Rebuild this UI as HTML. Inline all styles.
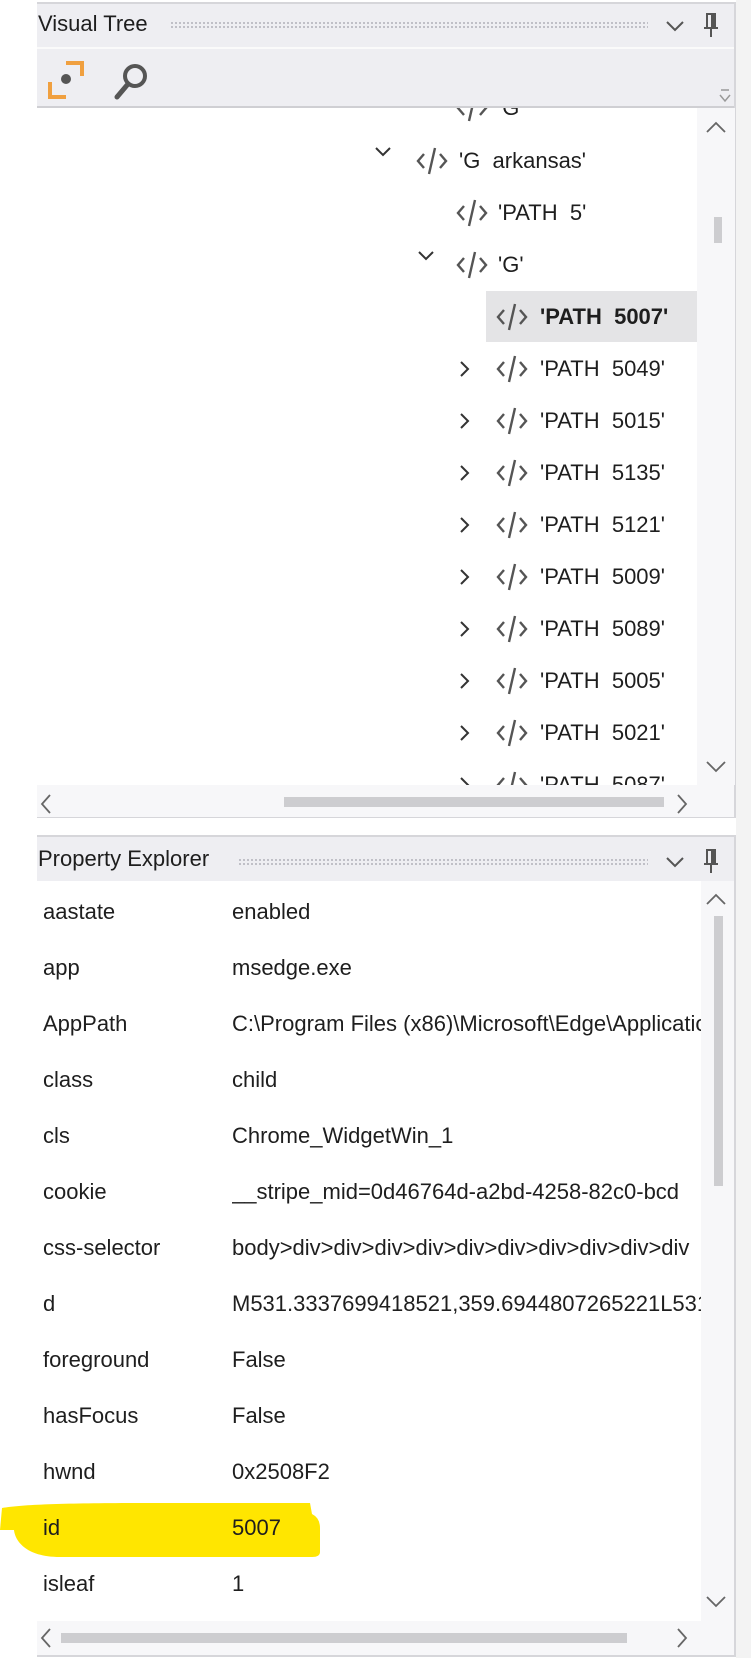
<!DOCTYPE html>
<html><head><meta charset="utf-8"><style>
*{margin:0;padding:0;box-sizing:border-box}
body{width:751px;height:1658px;background:#fff;position:relative;overflow:hidden;font-family:"Liberation Sans",sans-serif;color:#1e1e1e}
.abs{position:absolute}
.panel{position:absolute;left:37px;width:699px;border:2px solid #d6d6da;border-left:none;background:#fff}
.hdr{position:absolute;left:0;right:0;background:#eeeef2}
.title{position:absolute;left:1px;font-size:22px;color:#1e1e1e;white-space:nowrap}
.dots{position:absolute;height:9px;background-image:radial-gradient(circle,#b8b8c0 0.9px,transparent 1.2px);background-size:4px 4px}
.t{position:absolute;font-size:22px;white-space:nowrap;line-height:30px}
.prop{position:absolute;left:43px;font-size:22px;line-height:30px;white-space:nowrap}
.val{position:absolute;left:232px;width:469px;overflow:hidden;font-size:22px;line-height:30px;white-space:nowrap}
</style></head><body>
<div class="abs" style="left:736px;top:0;width:15px;height:1658px;background:#f3f3f3"></div>

<!-- Visual Tree panel -->
<div class="panel" style="top:2px;height:816px"></div>

<!-- partial top row (clipped under toolbar) -->
<div class="abs" style="left:0;top:108px;width:697px;height:14px;overflow:hidden">
<svg class="abs" style="left:455px;top:-15px" width="34" height="30"><path d="M9 8L3 15l6 7M14 28L20 2M25 8l6 7-6 7" fill="none" stroke="#555" stroke-width="2.4"/></svg>
<div class="t" style="left:498px;top:-15px">'G'</div>
</div>

<div class="hdr" style="left:37px;width:697px;top:4px;height:43px"></div>
<div class="abs" style="left:37px;top:47px;width:697px;height:2px;background:#fafafa"></div>
<div class="hdr" style="left:37px;width:697px;top:49px;height:58px"></div>
<div class="abs" style="left:37px;top:106px;width:697px;height:2px;background:#cfcfd3"></div>
<div class="title" style="left:38px;top:11px">Visual Tree</div>
<div class="dots" style="left:170px;top:21px;width:478px"></div>
<svg class="abs" style="left:664px;top:18px" width="22" height="16"><path d="M3 4l8 8 8-8" fill="none" stroke="#555" stroke-width="2"/></svg>
<svg class="abs" style="left:702px;top:12px" width="18" height="26"><path d="M5 2h8v14H5zM2 16h14M9 16v9" fill="none" stroke="#555" stroke-width="2"/><rect x="9" y="3" width="3" height="12" fill="#555"/></svg>
<svg class="abs" style="left:46px;top:60px" width="40" height="40"><path d="M20 3h16v13M4 22v15h16" fill="none" stroke="#f0a040" stroke-width="4"/><circle cx="20" cy="19" r="5" fill="#555"/></svg>
<svg class="abs" style="left:112px;top:61px" width="40" height="40"><circle cx="23" cy="15" r="10" fill="none" stroke="#555" stroke-width="4"/><path d="M16 23L5 36" stroke="#555" stroke-width="5" stroke-linecap="round"/></svg>
<svg class="abs" style="left:718px;top:88px" width="14" height="16"><path d="M3 2h8M2 7l5 6 5-6" fill="none" stroke="#999" stroke-width="1.5"/></svg>

<!-- tree area -->
<div class="abs" style="left:697px;top:108px;width:38px;height:677px;background:#f7f7f9"></div>
<svg class="abs" style="left:704px;top:118px" width="24" height="18"><path d="M3 14l9-9 9 9" fill="none" stroke="#666" stroke-width="1.8"/></svg>
<div class="abs" style="left:714px;top:217px;width:8px;height:26px;background:#cdcdd0"></div>
<svg class="abs" style="left:704px;top:758px" width="24" height="18"><path d="M3 4l9 9 9-9" fill="none" stroke="#666" stroke-width="1.8"/></svg>
<div class="abs" style="left:486px;top:291px;width:211px;height:51px;background:#e4e4e6"></div>

<svg class="abs" style="left:374px;top:145px" width="18" height="14"><path d="M2 3l7 7 7-7" fill="none" stroke="#333" stroke-width="2"/></svg>
<svg class="abs" style="left:415px;top:146px" width="34" height="30"><path d="M9 8L3 15l6 7M14 28L20 2M25 8l6 7-6 7" fill="none" stroke="#555" stroke-width="2.4"/></svg>
<div class="t" style="left:459px;top:146px">'G&nbsp; arkansas'</div>
<svg class="abs" style="left:455px;top:198px" width="34" height="30"><path d="M9 8L3 15l6 7M14 28L20 2M25 8l6 7-6 7" fill="none" stroke="#555" stroke-width="2.4"/></svg>
<div class="t" style="left:498px;top:198px">'PATH&nbsp; 5'</div>
<svg class="abs" style="left:417px;top:249px" width="18" height="14"><path d="M2 3l7 7 7-7" fill="none" stroke="#333" stroke-width="2"/></svg>
<svg class="abs" style="left:455px;top:250px" width="34" height="30"><path d="M9 8L3 15l6 7M14 28L20 2M25 8l6 7-6 7" fill="none" stroke="#555" stroke-width="2.4"/></svg>
<div class="t" style="left:498px;top:250px">'G'</div>
<svg class="abs" style="left:495px;top:302px" width="34" height="30"><path d="M9 8L3 15l6 7M14 28L20 2M25 8l6 7-6 7" fill="none" stroke="#555" stroke-width="2.4"/></svg>
<div class="t" style="left:540px;top:302px;font-weight:bold">'PATH&nbsp; 5007'</div>

<div style="position:absolute;left:0;top:354px">
<svg class="abs" style="left:458px;top:6px" width="14" height="18"><path d="M3 2l7 7-7 7" fill="none" stroke="#333" stroke-width="2"/></svg>
<svg class="abs" style="left:495px;top:0" width="34" height="30"><path d="M9 8L3 15l6 7M14 28L20 2M25 8l6 7-6 7" fill="none" stroke="#555" stroke-width="2.4"/></svg>
<div class="t" style="left:540px;top:0">'PATH&nbsp; 5049'</div>
</div>
<div style="position:absolute;left:0;top:406px">
<svg class="abs" style="left:458px;top:6px" width="14" height="18"><path d="M3 2l7 7-7 7" fill="none" stroke="#333" stroke-width="2"/></svg>
<svg class="abs" style="left:495px;top:0" width="34" height="30"><path d="M9 8L3 15l6 7M14 28L20 2M25 8l6 7-6 7" fill="none" stroke="#555" stroke-width="2.4"/></svg>
<div class="t" style="left:540px;top:0">'PATH&nbsp; 5015'</div>
</div>
<div style="position:absolute;left:0;top:458px">
<svg class="abs" style="left:458px;top:6px" width="14" height="18"><path d="M3 2l7 7-7 7" fill="none" stroke="#333" stroke-width="2"/></svg>
<svg class="abs" style="left:495px;top:0" width="34" height="30"><path d="M9 8L3 15l6 7M14 28L20 2M25 8l6 7-6 7" fill="none" stroke="#555" stroke-width="2.4"/></svg>
<div class="t" style="left:540px;top:0">'PATH&nbsp; 5135'</div>
</div>
<div style="position:absolute;left:0;top:510px">
<svg class="abs" style="left:458px;top:6px" width="14" height="18"><path d="M3 2l7 7-7 7" fill="none" stroke="#333" stroke-width="2"/></svg>
<svg class="abs" style="left:495px;top:0" width="34" height="30"><path d="M9 8L3 15l6 7M14 28L20 2M25 8l6 7-6 7" fill="none" stroke="#555" stroke-width="2.4"/></svg>
<div class="t" style="left:540px;top:0">'PATH&nbsp; 5121'</div>
</div>
<div style="position:absolute;left:0;top:562px">
<svg class="abs" style="left:458px;top:6px" width="14" height="18"><path d="M3 2l7 7-7 7" fill="none" stroke="#333" stroke-width="2"/></svg>
<svg class="abs" style="left:495px;top:0" width="34" height="30"><path d="M9 8L3 15l6 7M14 28L20 2M25 8l6 7-6 7" fill="none" stroke="#555" stroke-width="2.4"/></svg>
<div class="t" style="left:540px;top:0">'PATH&nbsp; 5009'</div>
</div>
<div style="position:absolute;left:0;top:614px">
<svg class="abs" style="left:458px;top:6px" width="14" height="18"><path d="M3 2l7 7-7 7" fill="none" stroke="#333" stroke-width="2"/></svg>
<svg class="abs" style="left:495px;top:0" width="34" height="30"><path d="M9 8L3 15l6 7M14 28L20 2M25 8l6 7-6 7" fill="none" stroke="#555" stroke-width="2.4"/></svg>
<div class="t" style="left:540px;top:0">'PATH&nbsp; 5089'</div>
</div>
<div style="position:absolute;left:0;top:666px">
<svg class="abs" style="left:458px;top:6px" width="14" height="18"><path d="M3 2l7 7-7 7" fill="none" stroke="#333" stroke-width="2"/></svg>
<svg class="abs" style="left:495px;top:0" width="34" height="30"><path d="M9 8L3 15l6 7M14 28L20 2M25 8l6 7-6 7" fill="none" stroke="#555" stroke-width="2.4"/></svg>
<div class="t" style="left:540px;top:0">'PATH&nbsp; 5005'</div>
</div>
<div style="position:absolute;left:0;top:718px">
<svg class="abs" style="left:458px;top:6px" width="14" height="18"><path d="M3 2l7 7-7 7" fill="none" stroke="#333" stroke-width="2"/></svg>
<svg class="abs" style="left:495px;top:0" width="34" height="30"><path d="M9 8L3 15l6 7M14 28L20 2M25 8l6 7-6 7" fill="none" stroke="#555" stroke-width="2.4"/></svg>
<div class="t" style="left:540px;top:0">'PATH&nbsp; 5021'</div>
</div>
<div style="position:absolute;left:0;top:770px;height:15px;width:697px;overflow:hidden">
<svg class="abs" style="left:458px;top:6px" width="14" height="18"><path d="M3 2l7 7-7 7" fill="none" stroke="#333" stroke-width="2"/></svg>
<svg class="abs" style="left:495px;top:0" width="34" height="30"><path d="M9 8L3 15l6 7M14 28L20 2M25 8l6 7-6 7" fill="none" stroke="#555" stroke-width="2.4"/></svg>
<div class="t" style="left:540px;top:0">'PATH&nbsp; 5087'</div>
</div>

<!-- horizontal scroll -->
<div class="abs" style="left:37px;top:785px;width:697px;height:32px;background:#f7f7f9"></div>
<svg class="abs" style="left:38px;top:792px" width="16" height="24"><path d="M12 3l-8 9 8 9" fill="none" stroke="#666" stroke-width="1.8"/></svg>
<div class="abs" style="left:284px;top:797px;width:380px;height:10px;background:#cdcdd0"></div>
<svg class="abs" style="left:674px;top:792px" width="16" height="24"><path d="M4 3l8 9-8 9" fill="none" stroke="#666" stroke-width="1.8"/></svg>

<!-- Property Explorer -->
<div class="panel" style="top:835px;height:822px"></div>
<div class="hdr" style="left:37px;width:697px;top:837px;height:44px"></div>
<div class="title" style="left:38px;top:846px">Property Explorer</div>
<div class="dots" style="left:238px;top:858px;width:410px"></div>
<svg class="abs" style="left:664px;top:854px" width="22" height="16"><path d="M3 4l8 8 8-8" fill="none" stroke="#555" stroke-width="2"/></svg>
<svg class="abs" style="left:702px;top:848px" width="18" height="26"><path d="M5 2h8v14H5zM2 16h14M9 16v9" fill="none" stroke="#555" stroke-width="2"/><rect x="9" y="3" width="3" height="12" fill="#555"/></svg>
<div class="abs" style="left:701px;top:881px;width:33px;height:740px;background:#f7f7f9"></div>
<svg class="abs" style="left:704px;top:890px" width="24" height="18"><path d="M3 14l9-9 9 9" fill="none" stroke="#666" stroke-width="1.8"/></svg>
<div class="abs" style="left:714px;top:916px;width:9px;height:270px;background:#cdcdd0"></div>
<svg class="abs" style="left:704px;top:1593px" width="24" height="18"><path d="M3 4l9 9 9-9" fill="none" stroke="#666" stroke-width="1.8"/></svg>

<svg class="abs" style="left:0;top:1500px" width="330" height="60"><path d="M2 8C40 2 120 3 310 3 L312 14 Q320 18 320 28 L320 52 Q320 57 312 57 L60 57 C25 57 15 40 14 30 L0 30 Z" fill="#ffe600"/></svg>

<div class="prop" style="top:897px">aastate</div><div class="val" style="top:897px">enabled</div>
<div class="prop" style="top:953px">app</div><div class="val" style="top:953px">msedge.exe</div>
<div class="prop" style="top:1009px">AppPath</div><div class="val" style="top:1009px">C:\Program Files (x86)\Microsoft\Edge\Application</div>
<div class="prop" style="top:1065px">class</div><div class="val" style="top:1065px">child</div>
<div class="prop" style="top:1121px">cls</div><div class="val" style="top:1121px">Chrome_WidgetWin_1</div>
<div class="prop" style="top:1177px">cookie</div><div class="val" style="top:1177px">__stripe_mid=0d46764d-a2bd-4258-82c0-bcd</div>
<div class="prop" style="top:1233px">css-selector</div><div class="val" style="top:1233px">body&gt;div&gt;div&gt;div&gt;div&gt;div&gt;div&gt;div&gt;div&gt;div&gt;div</div>
<div class="prop" style="top:1289px">d</div><div class="val" style="top:1289px">M531.3337699418521,359.6944807265221L531</div>
<div class="prop" style="top:1345px">foreground</div><div class="val" style="top:1345px">False</div>
<div class="prop" style="top:1401px">hasFocus</div><div class="val" style="top:1401px">False</div>
<div class="prop" style="top:1457px">hwnd</div><div class="val" style="top:1457px">0x2508F2</div>
<div class="prop" style="top:1513px">id</div><div class="val" style="top:1513px">5007</div>
<div class="prop" style="top:1569px">isleaf</div><div class="val" style="top:1569px">1</div>

<div class="abs" style="left:37px;top:1621px;width:697px;height:34px;background:#f7f7f9"></div>
<svg class="abs" style="left:38px;top:1626px" width="16" height="24"><path d="M12 3l-8 9 8 9" fill="none" stroke="#666" stroke-width="1.8"/></svg>
<div class="abs" style="left:61px;top:1633px;width:566px;height:10px;background:#cdcdd0"></div>
<svg class="abs" style="left:674px;top:1626px" width="16" height="24"><path d="M4 3l8 9-8 9" fill="none" stroke="#666" stroke-width="1.8"/></svg>
</body></html>
